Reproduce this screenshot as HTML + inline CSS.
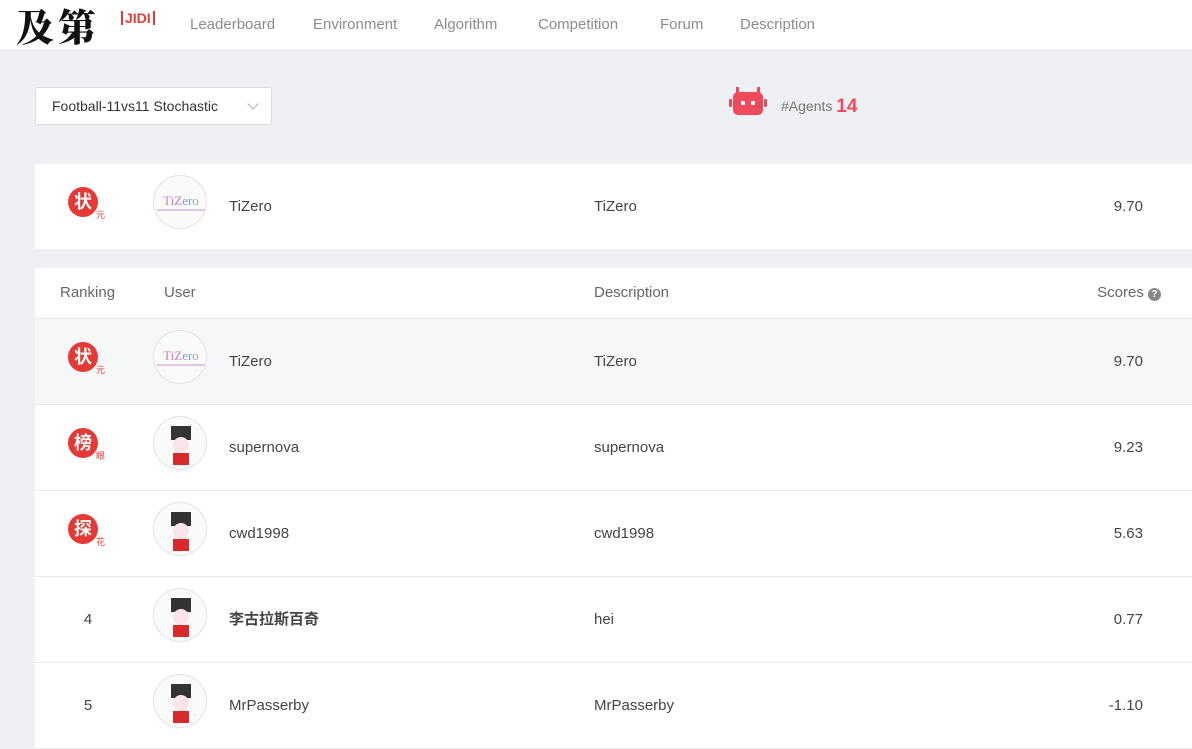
<!DOCTYPE html><html><head><style>
*{margin:0;padding:0;box-sizing:border-box}
body{width:1192px;height:749px;overflow:hidden;background:#eff0f3;font-family:"Liberation Sans","Noto Sans CJK SC",sans-serif;color:#333;position:relative}
.hdr{position:absolute;left:0;top:0;width:1192px;height:51px;background:#fff;border-bottom:1px solid #e5e6ea}
.logo{position:absolute;left:16px;top:2px;font-family:"Noto Serif CJK SC",serif;font-size:38px;font-weight:900;color:#111;letter-spacing:4px;line-height:46px}
.jidi{position:absolute;left:121px;top:11px;color:#e53935;font-weight:bold;font-size:14px;border-left:2px solid #e53935;border-right:2px solid #e53935;padding:0 2px;line-height:14px}
.nav{position:absolute;top:16px;font-size:15px;color:#8c8c8c}
.dd{position:absolute;left:35px;top:87px;width:237px;height:38px;background:#fff;border:1px solid #dcdde0;border-radius:3px;font-size:14px;padding:10px 16px;color:#333}
.dd:after{content:"";position:absolute;right:14px;top:12px;width:7px;height:7px;border-right:1px solid #aaa;border-bottom:1px solid #aaa;transform:rotate(45deg)}
.card{position:absolute;left:35px;width:1157px;background:#fff}
.row{position:absolute;left:0;width:1157px;height:86px;border-bottom:1px solid #e8e9ec;font-size:15px;color:#444}
.row span{position:absolute;top:34px;line-height:18px}
.av{position:absolute;left:118px;top:16px;width:54px;height:54px;border-radius:50%;border:1px solid #e3e3e3;background:#fafafa;overflow:hidden}
.rk{position:absolute;left:33px;top:23px;width:30px;height:30px;border-radius:50%;background:#e53935;color:#fff;font-size:18px;text-align:center;line-height:30px;font-weight:bold}
.rk i{position:absolute;left:28px;top:13px;font-style:normal;font-size:9px;color:#e53935;font-weight:normal}
.num{left:53px;transform:translateX(-50%)}
.sc{right:49px}
.tz{font-family:"Liberation Serif",serif;font-size:13px;position:absolute;left:3px;top:17px;width:48px;text-align:center;background:linear-gradient(90deg,#c9a227,#e46bd6,#6aa0e0,#e0a84a);-webkit-background-clip:text;color:transparent;border-bottom:2px solid #d9c6e8}
</style></head><body>
<div class="hdr">
<div class="logo">及第</div><div class="jidi">JIDI</div>
<div class="nav" style="left:190px">Leaderboard</div>
<div class="nav" style="left:313px">Environment</div>
<div class="nav" style="left:434px">Algorithm</div>
<div class="nav" style="left:538px">Competition</div>
<div class="nav" style="left:660px">Forum</div>
<div class="nav" style="left:740px">Description</div>
</div>
<div class="dd">Football-11vs11 Stochastic</div>
<svg style="position:absolute;left:728px;top:87px" width="40" height="30" viewBox="0 0 40 30"><rect x="8" y="0" width="3" height="7" fill="#ef4a5c"/><rect x="29" y="0" width="3" height="7" fill="#ef4a5c"/><rect x="5" y="5" width="30" height="23" rx="5" fill="#ef4a5c"/><rect x="1" y="12" width="3" height="8" rx="1" fill="#ef4a5c"/><rect x="36" y="12" width="3" height="8" rx="1" fill="#ef4a5c"/><rect x="13" y="14" width="4" height="4" rx="1" fill="#fff"/><rect x="23" y="14" width="4" height="4" rx="1" fill="#fff"/></svg>
<div style="position:absolute;left:781px;top:95px;font-size:14px;color:#777">#Agents <b style="color:#ef4a5c;font-size:19px;position:relative;top:1px">14</b></div>
<div class="card" style="top:164px;height:85px">
<div class="row" style="top:0;border:none"><div class="rk">状<i>元</i></div><div class="av" style="top:11px"><div class="tz">TiZero</div></div><span style="left:194px;top:34px">TiZero</span><span style="left:559px;top:34px">TiZero</span><span class="sc">9.70</span></div>
</div>
<div class="card" style="top:268px;height:481px">
<div class="row" style="top:0;height:51px;font-size:15px;color:#666"><span style="left:25px;top:16px">Ranking</span><span style="left:129px;top:16px">User</span><span style="left:559px;top:16px">Description</span><span style="right:31px;top:16px">Scores <b style="display:inline-block;width:13px;height:13px;border-radius:50%;background:#888;color:#fff;font-size:10px;text-align:center;line-height:13px">?</b></span></div>
<div class="row" style="top:51px;background:#f6f7f9"><div class="rk">状<i>元</i></div><div class="av" style="top:11px"><div class="tz">TiZero</div></div><span style="left:194px">TiZero</span><span style="left:559px">TiZero</span><span class="sc">9.70</span></div>
<div class="row" style="top:137px"><div class="rk">榜<i>眼</i></div><div class="av" style="top:11px"><svg width="54" height="54"><rect x="17" y="9" width="20" height="14" fill="#333"/><circle cx="27" cy="28" r="8" fill="#fbe4e8"/><rect x="19" y="36" width="16" height="12" fill="#d82a2a"/></svg></div><span style="left:194px">supernova</span><span style="left:559px">supernova</span><span class="sc">9.23</span></div>
<div class="row" style="top:223px"><div class="rk">探<i>花</i></div><div class="av" style="top:11px"><svg width="54" height="54"><rect x="17" y="9" width="20" height="14" fill="#333"/><circle cx="27" cy="28" r="8" fill="#fbe4e8"/><rect x="19" y="36" width="16" height="12" fill="#d82a2a"/></svg></div><span style="left:194px">cwd1998</span><span style="left:559px">cwd1998</span><span class="sc">5.63</span></div>
<div class="row" style="top:309px"><span class="num">4</span><div class="av" style="top:11px"><svg width="54" height="54"><rect x="17" y="9" width="20" height="14" fill="#333"/><circle cx="27" cy="28" r="8" fill="#fbe4e8"/><rect x="19" y="36" width="16" height="12" fill="#d82a2a"/></svg></div><span style="left:194px;top:33px;font-weight:bold;line-height:20px">李古拉斯百奇</span><span style="left:559px">hei</span><span class="sc">0.77</span></div>
<div class="row" style="top:395px"><span class="num">5</span><div class="av" style="top:11px"><svg width="54" height="54"><rect x="17" y="9" width="20" height="14" fill="#333"/><circle cx="27" cy="28" r="8" fill="#fbe4e8"/><rect x="19" y="36" width="16" height="12" fill="#d82a2a"/></svg></div><span style="left:194px">MrPasserby</span><span style="left:559px">MrPasserby</span><span class="sc">-1.10</span></div>
</div>
</body></html>
